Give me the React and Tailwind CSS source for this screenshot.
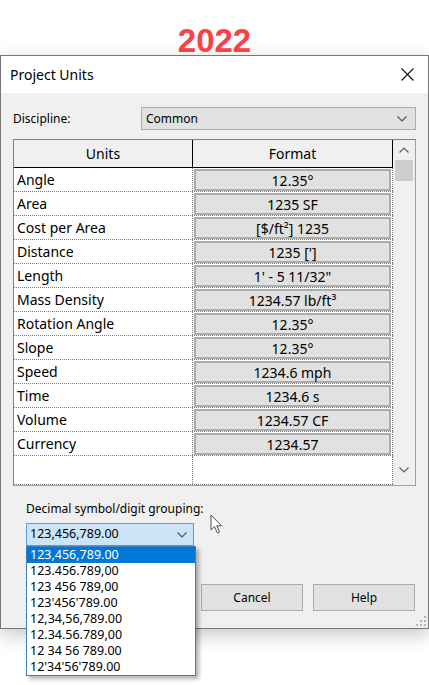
import React from "react";

const UNITS = [
  ["Angle", "12.35°"],
  ["Area", "1235 SF"],
  ["Cost per Area", "[$/ft²] 1235"],
  ["Distance", "1235 [']"],
  ["Length", "1' - 5 11/32\""],
  ["Mass Density", "1234.57 lb/ft³"],
  ["Rotation Angle", "12.35°"],
  ["Slope", "12.35°"],
  ["Speed", "1234.6 mph"],
  ["Time", "1234.6 s"],
  ["Volume", "1234.57 CF"],
  ["Currency", "1234.57"],
];

const GROUPINGS = [
  "123,456,789.00",
  "123.456.789,00",
  "123 456 789,00",
  "123'456'789.00",
  "12,34,56,789.00",
  "12.34.56.789,00",
  "12 34 56 789.00",
  "12'34'56'789.00",
];

function Chevron({ up = false, className = "" }) {
  return (
    <svg width="10" height="6" viewBox="0 0 10 6" className={className}>
      <polyline
        points={up ? "0.5,5.5 5,1 9.5,5.5" : "0.5,0.5 5,5 9.5,0.5"}
        fill="none"
        stroke="currentColor"
        strokeWidth="1.2"
      />
    </svg>
  );
}

function Grip() {
  const dots = [
    [8, 0],
    [4, 4],
    [8, 4],
    [0, 8],
    [4, 8],
    [8, 8],
  ];
  return (
    <svg width="10" height="10" viewBox="0 0 10 10">
      {dots.map(([x, y], i) => (
        <rect key={i} x={x} y={y} width="2" height="2" fill="#b4b4b4" />
      ))}
    </svg>
  );
}

export default function App() {
  return (
    <div className="relative w-[429px] h-[685px] overflow-hidden bg-white font-['Noto_Sans',sans-serif] text-black">
      <div className="h-[55px] pt-[24px] text-center font-['Liberation_Sans',Arial,sans-serif] font-bold text-[33px] leading-[33px] text-[#fa4146]">
        2022
      </div>

      <div className="w-[429px] h-[574px] border border-[#767676] bg-[#f0f0f0] flex flex-col shadow-[0_6px_18px_rgba(0,0,0,0.22)]">
        {/* title bar */}
        <div className="h-[37px] bg-white flex items-center justify-between pl-[9px] pr-[14px]">
          <span className="text-[14px]">Project Units</span>
          <svg width="13" height="13" viewBox="0 0 13 13">
            <path d="M0.5 0.5 L12.5 12.5 M12.5 0.5 L0.5 12.5" stroke="#111" strokeWidth="1.1" />
          </svg>
        </div>

        <div className="flex-1 flex flex-col px-[12px] pt-[14px] relative">
          {/* discipline */}
          <div className="flex items-center h-[23px]">
            <span className="w-[128px] text-[12px]">Discipline:</span>
            <div className="flex-1 h-[23px] bg-[#e1e1e1] border border-[#adadad] flex items-center justify-between pl-[4px] pr-[8px]">
              <span className="text-[12px]">Common</span>
              <Chevron className="text-[#555]" />
            </div>
          </div>

          {/* table */}
          <div className="mt-[9px] h-[347px] border border-[#a0a0a0] border-l-[#828282] border-t-[#828282] flex bg-white">
            <div className="flex-1 flex flex-col">
              <div className="h-[28px] flex bg-[#f0f0f0] border-b border-black">
                <div className="w-[179px] border-r border-black flex items-center justify-center text-[14px]">
                  Units
                </div>
                <div className="flex-1 border-r border-black flex items-center justify-center text-[14px]">
                  Format
                </div>
              </div>
              {UNITS.map(([name, fmt]) => (
                <div key={name} className="h-[24px] flex border-b border-dotted border-[#7a7a7a]">
                  <div className="w-[179px] border-r border-dotted border-[#7a7a7a] pl-[3px] flex items-center text-[14px]">
                    {name}
                  </div>
                  <div className="flex-1 border-r border-dotted border-[#7a7a7a] p-[1px] pb-[0px]">
                    <div className="h-full bg-[#e1e1e1] border-2 border-[#acacac] flex items-center justify-center text-[14px]">
                      {fmt}
                    </div>
                  </div>
                </div>
              ))}
              <div className="flex-1 flex border-b border-dotted border-[#7a7a7a]">
                <div className="w-[179px] border-r border-dotted border-[#7a7a7a]" />
                <div className="flex-1 border-r border-dotted border-[#7a7a7a]" />
              </div>
            </div>
            <div className="w-[22px] bg-[#f0f0f0] flex flex-col items-center">
              <div className="h-[20px] flex items-center justify-center">
                <Chevron up className="text-[#606060]" />
              </div>
              <div className="w-[18px] h-[21px] bg-[#cdcdcd]" />
              <div className="flex-1" />
              <div className="h-[22px] flex items-start justify-center pt-[4px]">
                <Chevron className="text-[#606060]" />
              </div>
            </div>
          </div>

          {/* decimal grouping */}
          <div className="mt-[15px] ml-[13px] text-[12px] leading-[16px]">Decimal symbol/digit grouping:</div>
          <div className="mt-[6px] ml-[13px] w-[168px] h-[23px] bg-[#cce4f7] border border-[#569de5] flex items-center justify-between pl-[3px] pr-[6px]">
            <span className="text-[12.5px]">123,456,789.00</span>
            <Chevron className="text-[#555]" />
          </div>

          {/* buttons */}
          <div className="mt-[38px] flex justify-end gap-[10px] mr-[1px]">
            <div className="w-[102px] h-[27px] bg-[#e1e1e1] border border-[#adadad] flex items-center justify-center text-[12px]">
              OK
            </div>
            <div className="w-[102px] h-[27px] bg-[#e1e1e1] border border-[#adadad] flex items-center justify-center text-[12px]">
              Cancel
            </div>
            <div className="w-[102px] h-[27px] bg-[#e1e1e1] border border-[#adadad] flex items-center justify-center text-[12px]">
              Help
            </div>
          </div>

          <div className="absolute right-[2px] bottom-[2px]">
            <Grip />
          </div>
        </div>
      </div>

      {/* open dropdown list */}
      <div className="absolute left-[26px] top-[546px] w-[170px] bg-white border border-[#3f7fb5] shadow-[3px_3px_4px_rgba(0,0,0,0.3)]">
        {GROUPINGS.map((g, i) => (
          <div
            key={g}
            className={
              i === 0
                ? "h-[16px] pl-[3px] flex items-center text-[12.5px] bg-[#0078d7] text-white"
                : "h-[16px] pl-[3px] flex items-center text-[12.5px]"
            }
          >
            {g}
          </div>
        ))}
      </div>

      {/* mouse cursor */}
      <svg className="absolute left-[210px] top-[514px]" width="14" height="21" viewBox="0 0 14 21">
        <path
          d="M1 1 L1 16 L4.5 12.5 L7.5 19 L9.5 18 L6.8 11.8 L11.5 11.8 Z"
          fill="white"
          stroke="#555"
          strokeWidth="1"
          strokeLinejoin="round"
        />
      </svg>
    </div>
  );
}
